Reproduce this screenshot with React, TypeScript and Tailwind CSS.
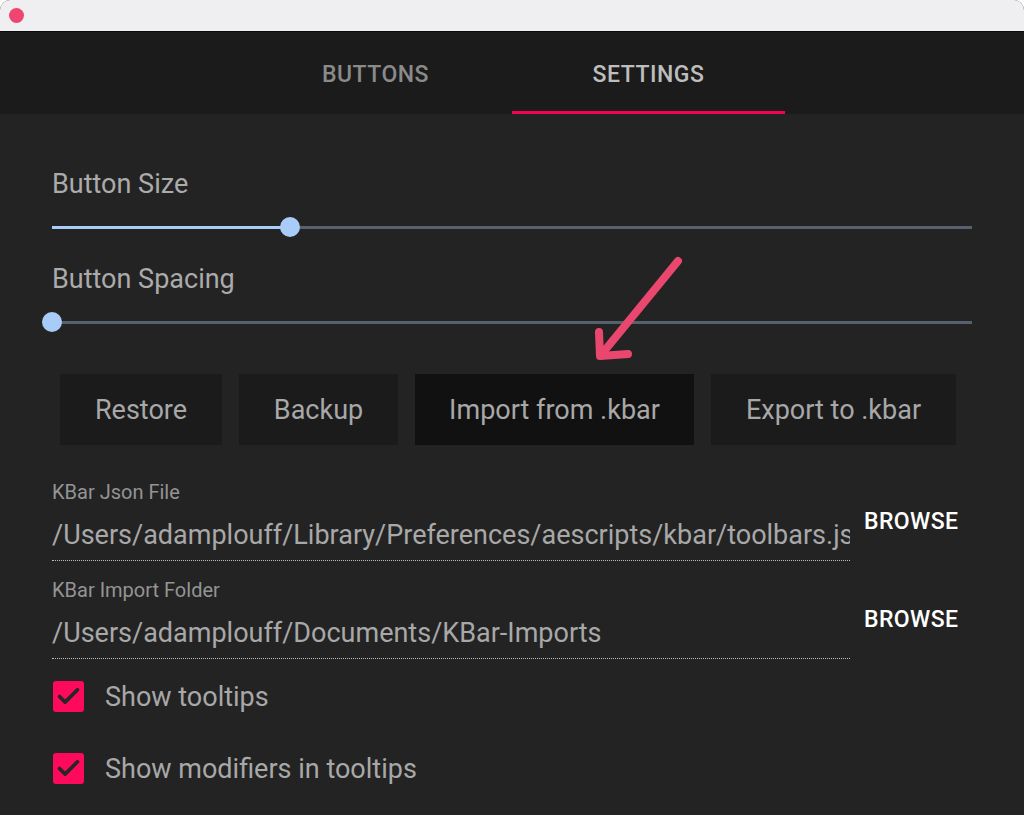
import { Check } from 'lucide-react'

function Slider({ value }: { value: number }) {
  return (
    <div className="relative h-[40px] flex items-center">
      <div className="h-[3px] w-full bg-[#56606f]" />
      <div className="absolute left-0 top-[19px] h-[3px] bg-[#a8ccf7]" style={{ width: `${value}%` }} />
      <div
        className="absolute top-[10px] h-[20px] w-[20px] -ml-[10px] rounded-full bg-[#a8ccf7]"
        style={{ left: `${value}%` }}
      />
    </div>
  )
}

function PathField({ label, value }: { label: string; value: string }) {
  return (
    <div className="flex items-center">
      <div className="w-[798px] border-b border-dotted border-[#bdbdbd]">
        <div className="text-[20px] leading-[21px] text-[#949494]">{label}</div>
        <div className="mt-[16px] mb-[9px] h-[32px] text-[27px] leading-[32px] text-[#a8a8a8] whitespace-nowrap overflow-hidden">
          {value}
        </div>
      </div>
      <button className="ml-[13px] mt-[2px] px-[1px] text-[23px] font-medium text-white tracking-[0.4px]">BROWSE</button>
    </div>
  )
}

function CheckRow({ label }: { label: string }) {
  return (
    <div className="flex items-center h-[31px]">
      <div className="ml-[1px] w-[31px] h-[31px] rounded-[3px] bg-[#fd0a5c] flex items-center justify-center">
        <Check size={27} strokeWidth={3.2} className="text-[#262626]" />
      </div>
      <span className="ml-[21px] pt-[2px] text-[27px] text-[#a8a8a8]">{label}</span>
    </div>
  )
}

export default function App() {
  const buttons = [
    { label: 'Restore', w: 'w-[162px]', bg: 'bg-[#1b1b1b]' },
    { label: 'Backup', w: 'w-[159px]', bg: 'bg-[#1b1b1b]' },
    { label: 'Import from .kbar', w: 'w-[279px]', bg: 'bg-[#111111]' },
    { label: 'Export to .kbar', w: 'w-[245px]', bg: 'bg-[#1b1b1b]' },
  ]

  return (
    <div className="w-[1024px] h-[815px] bg-white" style={{ fontFamily: 'Roboto, "Liberation Sans", sans-serif' }}>
      <div className="relative h-full rounded-t-[10px] overflow-hidden bg-[#232323] flex flex-col">
        <div className="h-[32px] bg-[#efeff1] border-b border-[#0a0a0a] flex items-center pl-[9px]">
          <div className="w-[15px] h-[15px] rounded-full bg-[#ee4670]" />
        </div>

        <div className="h-[82px] bg-[#1b1b1b] flex justify-center">
          <div className="w-[273px] flex items-center justify-center text-[23px] font-medium text-[#8a8a8a] tracking-[0.5px] pt-[5px]">
            BUTTONS
          </div>
          <div className="w-[273px] flex items-center justify-center text-[23px] font-medium text-[#bdbdbd] tracking-[0.5px] border-b-[3px] border-[#f50057] pt-[8px]">
            SETTINGS
          </div>
        </div>

        <div className="px-[52px] pt-[56px] flex flex-col">
          <div className="text-[27px] leading-[28px] text-[#ababab]">Button Size</div>
          <div className="mt-[9px]">
            <Slider value={25.9} />
          </div>
          <div className="mt-[18px] text-[27px] leading-[28px] text-[#ababab]">Button Spacing</div>
          <div className="mt-[9px]">
            <Slider value={0} />
          </div>

          <div className="mt-[32px] pl-[8px] flex gap-[17px]">
            {buttons.map((b) => (
              <button
                key={b.label}
                className={`${b.w} ${b.bg} h-[71px] pt-[1px] text-[27px] text-[#a8a8a8] flex items-center justify-center`}
              >
                {b.label}
              </button>
            ))}
          </div>

          <div className="mt-[37px] flex flex-col gap-[19px]">
            <PathField label="KBar Json File" value="/Users/adamplouff/Library/Preferences/aescripts/kbar/toolbars.json" />
            <PathField label="KBar Import Folder" value="/Users/adamplouff/Documents/KBar-Imports" />
          </div>

          <div className="mt-[22px] flex flex-col gap-[41px]">
            <CheckRow label="Show tooltips" />
            <CheckRow label="Show modifiers in tooltips" />
          </div>
        </div>

        <svg className="absolute left-0 top-0 pointer-events-none" width="1024" height="815">
          <g stroke="#ea476f" strokeWidth="8" strokeLinecap="round" strokeLinejoin="round" fill="none">
            <path d="M678 261 L601 355" />
            <path d="M599 332 L600 356 L628 354" />
          </g>
        </svg>
      </div>
    </div>
  )
}
